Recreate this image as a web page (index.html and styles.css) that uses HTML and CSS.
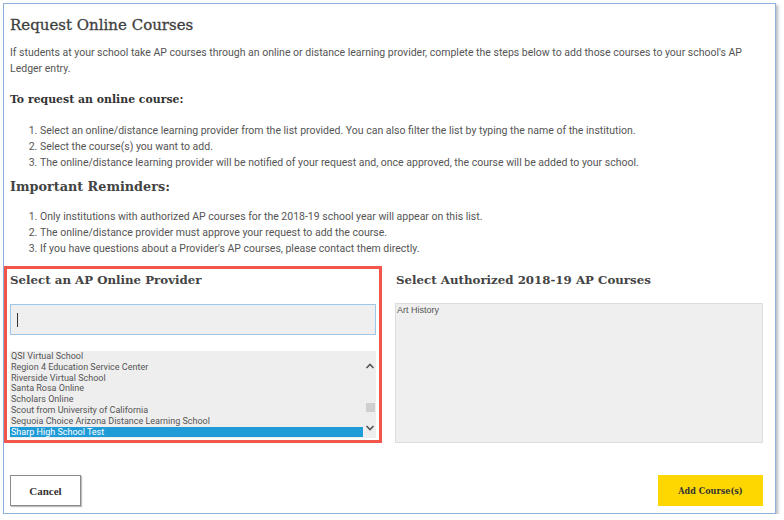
FILE: index.html
```html
<!DOCTYPE html>
<html lang="en">
<head>
<meta charset="utf-8">
<title>Request Online Courses</title>
<link rel="stylesheet" href="styles.css">
</head>
<body>
<div class="frame">
  <h1 class="title">Request Online Courses</h1>
  <p class="intro">If students at your school take AP courses through an online or distance learning provider, complete the steps below to add those courses to your school's AP Ledger entry.</p>

  <h2 class="subhead strong">To request an online course:</h2>
  <ol class="steps">
    <li>Select an online/distance learning provider from the list provided. You can also filter the list by typing the name of the institution.</li>
    <li>Select the course(s) you want to add.</li>
    <li>The online/distance learning provider will be notified of your request and, once approved, the course will be added to your school.</li>
  </ol>

  <h2 class="subhead reminders">Important Reminders:</h2>
  <ol class="steps">
    <li>Only institutions with authorized AP courses for the 2018-19 school year will appear on this list.</li>
    <li>The online/distance provider must approve your request to add the course.</li>
    <li>If you have questions about a Provider's AP courses, please contact them directly.</li>
  </ol>

  <div class="columns">
    <div class="provider">
      <h3 class="colhead">Select an AP Online Provider</h3>
      <div class="search"><span class="caret"></span></div>
      <div class="listbox">
        <ul class="options">
          <li>QSI Virtual School</li>
          <li>Region 4 Education Service Center</li>
          <li>Riverside Virtual School</li>
          <li>Santa Rosa Online</li>
          <li>Scholars Online</li>
          <li>Scout from University of California</li>
          <li>Sequoia Choice Arizona Distance Learning School</li>
          <li class="selected">Sharp High School Test</li>
        </ul>
        <div class="scrollbar">
          <svg class="arrow" width="10" height="8" viewBox="0 0 10 8"><path d="M1.5 6 L5 2.5 L8.5 6" fill="none" stroke="#555" stroke-width="1.6"/></svg>
          <span class="thumb"></span>
          <svg class="arrow" width="10" height="8" viewBox="0 0 10 8"><path d="M1.5 2 L5 5.5 L8.5 2" fill="none" stroke="#555" stroke-width="1.6"/></svg>
        </div>
      </div>
    </div>
    <div class="courses">
      <h3 class="colhead">Select Authorized 2018-19 AP Courses</h3>
      <div class="coursebox">
        <div class="course">Art History</div>
      </div>
    </div>
  </div>

  <div class="actions">
    <button class="btn cancel">Cancel</button>
    <button class="btn add">Add Course(s)</button>
  </div>
</div>
</body>
</html>
```

FILE: styles.css
```css
* { box-sizing: border-box; }
html, body { margin: 0; padding: 0; background: #fff; }
body { padding: 3px 0 0 3px; }

.frame {
  width: 773px;
  height: 511px;
  border: 1px solid #8fb0d9;
  box-shadow: 2px 2px 3px rgba(90, 100, 120, 0.45);
  padding: 10px 12px 0 6px;
  font-family: Roboto, "Liberation Sans", sans-serif;
  color: #555;
}

.title {
  margin: 0;
  font-family: "DejaVu Serif", serif;
  font-weight: normal;
  font-size: 15px;
  line-height: 22px;
  color: #3f3f3f;
  -webkit-text-stroke: 0.3px #3f3f3f;
}

.intro {
  margin: 9px 0 0;
  font-size: 10.5px;
  line-height: 16px;
  padding-right: 4px;
}

.subhead {
  margin: 15px 0 0;
  font-family: "DejaVu Serif", serif;
  font-size: 10.9px;
  line-height: 16px;
  font-weight: bold;
  color: #333;
}
.subhead.reminders {
  margin-top: 8px;
  font-size: 12.8px;
  color: #444;
}

.steps {
  margin: 15px 0 0;
  padding-left: 30px;
  font-size: 10.5px;
  line-height: 16px;
}
.reminders + .steps { margin-top: 14px; }

.columns {
  display: flex;
  gap: 13px;
  margin: 9px 0 0 -6px;
}

.provider {
  width: 378px;
  height: 177px;
  border: 3px solid #f2564a;
  padding: 3px 3px 0 3px;
  display: flex;
  flex-direction: column;
}

.colhead {
  margin: 0;
  font-family: "DejaVu Serif", serif;
  font-size: 11.8px;
  line-height: 16px;
  font-weight: bold;
  color: #444;
}

.search {
  margin-top: 16px;
  height: 31px;
  background: #efefef;
  border: 1px solid #9dc6e8;
  padding: 8px 0 0 6px;
}
.caret {
  display: block;
  width: 1px;
  height: 14px;
  background: #333;
}

.listbox {
  margin-top: 16px;
  height: 87px;
  background: #eeeeee;
  display: flex;
}
.options {
  list-style: none;
  margin: 0;
  padding: 0;
  flex: 1;
  font-size: 9px;
  line-height: 10.8px;
  color: #555;
}
.options li { padding-left: 1px; white-space: nowrap; }
.options li.selected {
  background: #1f9bd7;
  color: #fff;
}
.scrollbar {
  width: 13px;
  display: flex;
  flex-direction: column;
  align-items: center;
  padding-top: 11px;
}
.arrow { display: block; }
.thumb {
  display: block;
  width: 9px;
  height: 9px;
  background: #cfcfcf;
  margin: 33px 0 12px 1px;
}

.courses {
  width: 368px;
  padding-top: 6px;
}
.courses .colhead { padding-left: 1px; }
.coursebox {
  margin-top: 15px;
  height: 140px;
  background: #efefef;
  border: 1px solid #dcdcdc;
  padding: 1px 1px;
}
.course {
  font-family: "Liberation Sans", Arial, sans-serif;
  font-size: 9px;
  line-height: 10px;
  color: #555;
}

.actions {
  display: flex;
  justify-content: space-between;
  margin-top: 32px;
}
.btn {
  height: 31px;
  margin: 0;
  cursor: pointer;
}
.cancel {
  width: 71px;
  background: #fff;
  border: 1px solid #8a8a8a;
  box-shadow: 1px 1px 1px rgba(0,0,0,0.25);
  font-family: "Liberation Serif", serif;
  font-weight: bold;
  font-size: 11px;
  color: #333;
}
.add {
  width: 105px;
  background: #ffd700;
  border: none;
  font-family: "DejaVu Serif", serif;
  font-stretch: condensed;
  font-weight: bold;
  font-size: 9px;
  color: #333;
}
```
